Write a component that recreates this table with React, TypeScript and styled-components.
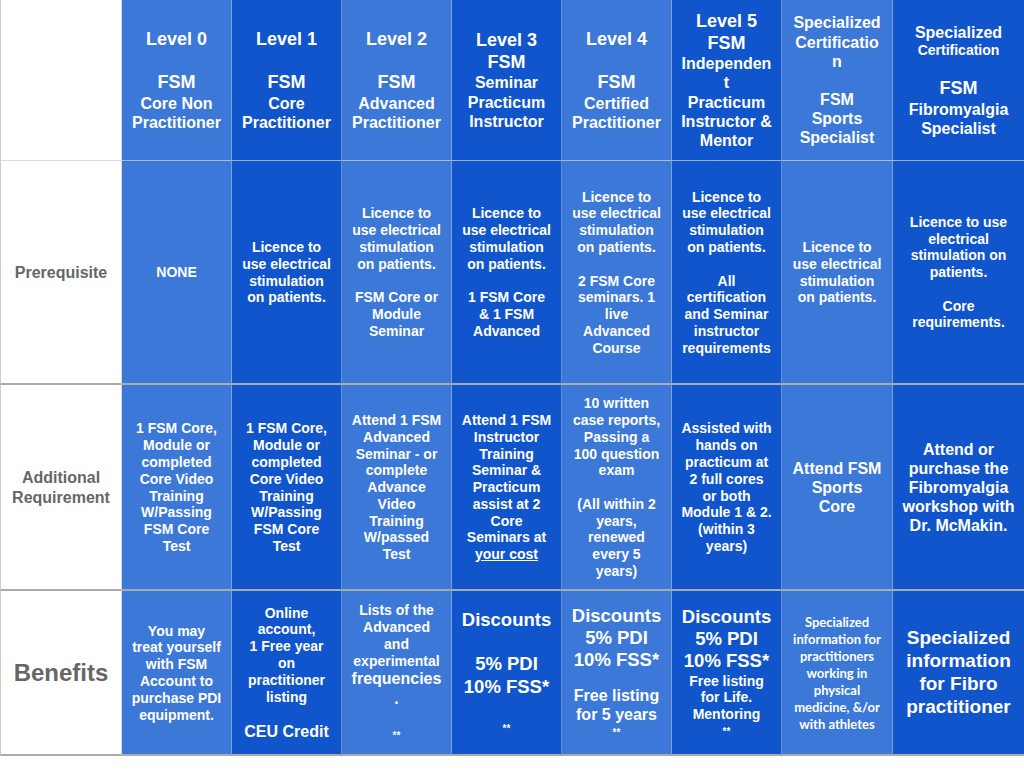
import React from 'react';
import styled, { createGlobalStyle } from 'styled-components';

const GlobalStyle = createGlobalStyle`
  html, body {
    margin: 0;
    padding: 0;
    background: #ffffff;
  }
  body {
    font-family: "Liberation Sans", Arial, sans-serif;
  }
`;

type Tone = 'light' | 'dark';
type Face = 'arial' | 'calibri';

interface Ln {
  t: React.ReactNode;
  s: number;
  lh?: number;
  face?: Face;
}

const ln = (t: React.ReactNode, s = 14, lh?: number, face?: Face): Ln => ({ t, s, lh, face });
const gap = (s = 14, lh?: number): Ln => ({ t: '', s, lh });
const stars = (): Ln => ({ t: '**', s: 10, lh: 17 });
const note = (t: string): Ln => ({ t, s: 13, lh: 17, face: 'calibri' });

const Sheet = styled.div`
  display: grid;
  grid-template-columns: 122px repeat(6, 110px) 111px 131px;
  grid-template-rows: 161px 224px 206px 165px;
  width: 1024px;
`;

const Cell = styled.div<{ $row: number }>`
  box-sizing: border-box;
  display: flex;
  flex-direction: column;
  align-items: center;
  justify-content: center;
  text-align: center;
  font-weight: 700;
  overflow: hidden;
  padding-top: 1px;
  border-bottom: ${({ $row }) =>
    $row === 0 ? '1px solid rgba(205, 210, 220, 0.75)' : '2px solid #ababab'};
`;

const LabelCell = styled(Cell)`
  background: #ffffff;
  color: #666666;
  border-left: 1px solid #cccccc;
  border-right: 1px solid #d6d6d6;
`;

const LevelCell = styled(Cell)<{ $tone: Tone }>`
  background: ${({ $tone }) => ($tone === 'light' ? '#3c78d8' : '#1155cc')};
  color: #ffffff;
  border-right: 1px solid rgba(190, 200, 222, 0.5);

  &:nth-child(9n) {
    border-right: none;
  }
`;

const Line = styled.span<{ $size: number; $lh: number; $face: Face }>`
  display: block;
  white-space: nowrap;
  font-family: ${({ $face }) =>
    $face === 'calibri' ? 'Lato, "Open Sans", sans-serif' : '"Liberation Sans", Arial, sans-serif'};
  font-size: ${({ $size }) => $size}px;
  line-height: ${({ $lh }) => $lh}px;
  height: ${({ $lh }) => $lh}px;
`;

const Under = styled.span`
  text-decoration: underline;
`;

const tones: Tone[] = ['light', 'dark', 'light', 'dark', 'light', 'dark', 'light', 'dark'];

const licence = [ln('Licence to'), ln('use electrical'), ln('stimulation'), ln('on patients.')];
const coreVideo = [
  ln('1 FSM Core,'),
  ln('Module or'),
  ln('completed'),
  ln('Core Video'),
  ln('Training'),
  ln('W/Passing'),
  ln('FSM Core'),
  ln('Test'),
];
const discounts = [ln('Discounts', 18.5), ln('5% PDI', 18.5), ln('10% FSS*', 18.5)];

const rows: { label: Ln[]; cells: Ln[][] }[] = [
  {
    label: [],
    cells: [
      [ln('Level 0', 18), gap(18), ln('FSM', 18), ln('Core Non', 16), ln('Practitioner', 16)],
      [ln('Level 1', 18), gap(18), ln('FSM', 18), ln('Core', 16), ln('Practitioner', 16)],
      [ln('Level 2', 18), gap(18), ln('FSM', 18), ln('Advanced', 16), ln('Practitioner', 16)],
      [ln('Level 3', 18), ln('FSM', 18), ln('Seminar', 16), ln('Practicum', 16), ln('Instructor', 16)],
      [ln('Level 4', 18), gap(18), ln('FSM', 18), ln('Certified', 16), ln('Practitioner', 16)],
      [
        ln('Level 5', 18),
        ln('FSM', 18),
        ln('Independen', 16),
        ln('t', 16),
        ln('Practicum', 16),
        ln('Instructor &', 16),
        ln('Mentor', 16),
      ],
      [
        ln('Specialized', 16),
        ln('Certificatio', 16),
        ln('n', 16),
        gap(16),
        ln('FSM', 16),
        ln('Sports', 16),
        ln('Specialist', 16),
      ],
      [
        ln('Specialized', 16),
        ln('Certification', 14),
        gap(16),
        ln('FSM', 18),
        ln('Fibromyalgia', 16),
        ln('Specialist', 16),
      ],
    ],
  },
  {
    label: [ln('Prerequisite', 16)],
    cells: [
      [ln('NONE')],
      licence,
      [...licence, gap(), ln('FSM Core or'), ln('Module'), ln('Seminar')],
      [...licence, gap(), ln('1 FSM Core'), ln('& 1 FSM'), ln('Advanced')],
      [...licence, gap(), ln('2 FSM Core'), ln('seminars. 1'), ln('live'), ln('Advanced'), ln('Course')],
      [...licence, gap(), ln('All'), ln('certification'), ln('and Seminar'), ln('instructor'), ln('requirements')],
      licence,
      [ln('Licence to use'), ln('electrical'), ln('stimulation on'), ln('patients.'), gap(), ln('Core'), ln('requirements.')],
    ],
  },
  {
    label: [ln('Additional', 16), ln('Requirement', 16)],
    cells: [
      coreVideo,
      coreVideo,
      [
        ln('Attend 1 FSM'),
        ln('Advanced'),
        ln('Seminar - or'),
        ln('complete'),
        ln('Advance'),
        ln('Video'),
        ln('Training'),
        ln('W/passed'),
        ln('Test'),
      ],
      [
        ln('Attend 1 FSM'),
        ln('Instructor'),
        ln('Training'),
        ln('Seminar &'),
        ln('Practicum'),
        ln('assist at 2'),
        ln('Core'),
        ln('Seminars at'),
        ln(<Under>your cost</Under>),
      ],
      [
        ln('10 written'),
        ln('case reports,'),
        ln('Passing a'),
        ln('100 question'),
        ln('exam'),
        gap(),
        ln('(All within 2'),
        ln('years,'),
        ln('renewed'),
        ln('every 5'),
        ln('years)'),
      ],
      [
        ln('Assisted with'),
        ln('hands on'),
        ln('practicum at'),
        ln('2 full cores'),
        ln('or both'),
        ln('Module 1 & 2.'),
        ln('(within 3'),
        ln('years)'),
      ],
      [ln('Attend FSM', 16), ln('Sports', 16), ln('Core', 16)],
      [
        ln('Attend or', 16),
        ln('purchase the', 16),
        ln('Fibromyalgia', 16),
        ln('workshop with', 16),
        ln('Dr. McMakin.', 16),
      ],
    ],
  },
  {
    label: [ln('Benefits', 24)],
    cells: [
      [
        ln('You may'),
        ln('treat yourself'),
        ln('with FSM'),
        ln('Account to'),
        ln('purchase PDI'),
        ln('equipment.'),
      ],
      [
        ln('Online'),
        ln('account,'),
        ln('1 Free year'),
        ln('on'),
        ln('practitioner'),
        ln('listing'),
        gap(),
        ln('CEU Credit', 16),
      ],
      [
        ln('Lists of the'),
        ln('Advanced'),
        ln('and'),
        ln('experimental'),
        ln('frequencies', 16),
        ln('.', 16),
        gap(16),
        stars(),
      ],
      [ln('Discounts', 18.5), gap(18.5), ln('5% PDI', 18.5), ln('10% FSS*', 18.5), gap(18.5), stars()],
      [...discounts, gap(12), ln('Free listing', 16), ln('for 5 years', 16), stars()],
      [...discounts, ln('Free listing'), ln('for Life.'), ln('Mentoring'), stars()],
      [
        note('Specialized'),
        note('information for'),
        note('practitioners'),
        note('working in'),
        note('physical'),
        note('medicine, &/or'),
        note('with athletes'),
      ],
      [ln('Specialized', 19), ln('information', 19), ln('for Fibro', 19), ln('practitioner', 19)],
    ],
  },
];

const renderLines = (lines: Ln[]) =>
  lines.map((l, i) => (
    <Line key={i} $size={l.s} $lh={l.lh ?? Math.round(l.s * 12) / 10} $face={l.face ?? 'arial'}>
      {l.t}
    </Line>
  ));

const App = () => {
  return (
    <>
      <GlobalStyle />
      <Sheet>
        {rows.map((row, r) => (
          <React.Fragment key={r}>
            <LabelCell $row={r}>{renderLines(row.label)}</LabelCell>
            {row.cells.map((lines, c) => (
              <LevelCell key={c} $row={r} $tone={tones[c]}>
                {renderLines(lines)}
              </LevelCell>
            ))}
          </React.Fragment>
        ))}
      </Sheet>
    </>
  );
};

export default App;
